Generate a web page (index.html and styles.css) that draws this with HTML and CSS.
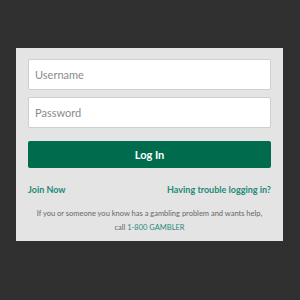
FILE: index.html
```html
<!DOCTYPE html>
<html>
<head>
<meta charset="utf-8">
<link rel="stylesheet" href="styles.css">
</head>
<body>
<div class="panel">
  <input class="field" type="text" placeholder="Username">
  <input class="field" type="password" placeholder="Password">
  <button class="login">Log In</button>
  <div class="links">
    <a class="link">Join Now</a>
    <a class="link">Having trouble logging in?</a>
  </div>
  <p class="help"><span class="line">If you or someone you know has a gambling problem and wants help,</span><span class="line">call <a class="phone">1-800 GAMBLER</a></span></p>
</div>
</body>
</html>
```
FILE: styles.css
```css
html, body {
  margin: 0;
  padding: 0;
  background: #303030;
  height: 100%;
}
body {
  font-family: Lato, "Open Sans", sans-serif;
}
.panel {
  margin: 48px 0 0 16px;
  width: 267px;
  box-sizing: border-box;
  padding: 11px 12px 6px;
  background: #e4e4e4;
  display: flex;
  flex-direction: column;
}
.field {
  height: 31px;
  box-sizing: border-box;
  border: 1px solid #cfcfcf;
  border-radius: 2px;
  background: #fff;
  padding: 0 6px;
  font-family: inherit;
  font-size: 11px;
  color: #333;
  margin: 0 0 7px;
  outline: none;
}
.field::placeholder {
  color: #8a8a8a;
}
.login {
  margin-top: 6px;
  height: 27px;
  border: none;
  border-radius: 2px;
  background: #006c4d;
  color: #fff;
  font-family: inherit;
  font-weight: 700;
  font-size: 11px;
  padding: 0;
}
.links {
  display: flex;
  justify-content: space-between;
  margin-top: 14px;
  line-height: 15px;
}
.link {
  color: #1f8a78;
  font-weight: 700;
  font-size: 9px;
}
.help {
  margin: 10px 0 0;
  text-align: center;
  font-size: 7.5px;
  line-height: 14px;
  color: #666;
  display: flex;
  flex-direction: column;
  white-space: nowrap;
}
.phone {
  color: #1f8a78;
}
```
